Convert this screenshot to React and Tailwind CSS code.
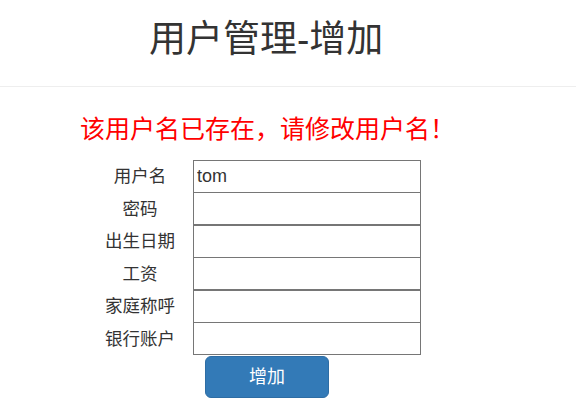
import React from 'react';

const fields = [
  { label: '用户名', value: 'tom' },
  { label: '密码', value: '' },
  { label: '出生日期', value: '' },
  { label: '工资', value: '' },
  { label: '家庭称呼', value: '' },
  { label: '银行账户', value: '' },
];

const App = () => {
  return (
    <div className="w-[576px] h-[418px] bg-white text-[#333] overflow-hidden font-['Liberation_Sans','Noto_Sans_CJK_SC',sans-serif]">
      {/* Header */}
      <div className="h-[87px] border-b border-[#eee] pl-[149px] pt-[19px]">
        <h1 className="text-[37px] leading-[41px] font-normal">用户管理-增加</h1>
      </div>

      {/* Error message */}
      <p className="mt-[29px] ml-[80px] text-[25px] leading-[27px] text-[#ff0000]">
        该用户名已存在，请修改用户名！
      </p>

      {/* Form */}
      <div className="mt-[17px] ml-[95px] flex flex-col">
        {fields.map((f) => (
          <div key={f.label} className="flex items-center h-[32.5px]">
            <span className="w-[90px] text-center text-[17.5px]">{f.label}</span>
            <input
              type="text"
              defaultValue={f.value}
              className="ml-[8px] w-[228px] h-[33px] border border-[#767676] bg-white px-[3px] text-[18px] text-[#333] outline-none"
            />
          </div>
        ))}
        <div className="pl-[110px] pt-[1px]">
          <button className="w-[124px] h-[42px] rounded-[6px] bg-[#337ab7] border border-[#2e6da4] text-white text-[18px]">
            增加
          </button>
        </div>
      </div>
    </div>
  );
};

export default App;
